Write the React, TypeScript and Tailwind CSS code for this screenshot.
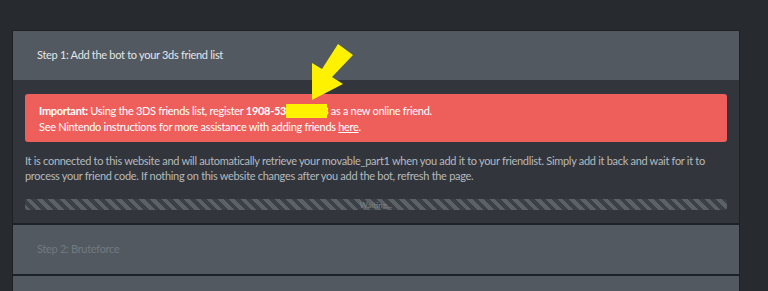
const font = { fontFamily: 'Lato, "Noto Sans", sans-serif' };

function StepCard({ title, active, children }: { title?: string; active?: boolean; children?: React.ReactNode }) {
	return (
		<div className="border border-[#1e2125] bg-[#32363c]">
			<div className="flex h-[49px] items-center bg-[#525960] pl-[24px]">
				{title && (
					<span className={active ? 'text-[11px] tracking-[-0.3px] text-[#e4e6e8]' : 'text-[11px] tracking-[-0.3px] text-[#727980]'}>
						{title}
					</span>
				)}
			</div>
			{children}
		</div>
	);
}

function Arrow() {
	return (
		<svg className="pointer-events-none absolute left-[305px] top-[40px]" width="55" height="65" viewBox="305 40 55 65">
			<polygon points="338,44 353,55 332,77 343,84 312,100 312,63 322,69" fill="#fff200" />
		</svg>
	);
}

export default function App() {
	return (
		<div className="relative h-[291px] w-[768px] overflow-hidden bg-[#272a2f]" style={font}>
			<div className="ml-[12px] w-[728px] pt-[30px]">
				<StepCard title="Step 1: Add the bot to your 3ds friend list" active>
					<div className="px-[12px] pb-[13px] pt-[14px]">
						<div className="rounded-[3px] bg-[#ee5f5b] px-[14px] py-[7px] text-[11px] leading-[16px] tracking-[-0.3px] text-white">
							<p>
								<b>Important:</b> Using the 3DS friends list, register <b>1908-53</b>
								<span className="relative z-10 -mr-[5px] inline-block h-[14px] w-[41px] translate-y-[3px] bg-[#fff200]" />
								<b>8</b> as a new online friend.
							</p>
							<p>
								See Nintendo instructions for more assistance with adding friends <u>here</u>.
							</p>
						</div>
						<p className="mt-[11px] text-[11px] leading-[15px] tracking-[-0.3px] text-[#b5b9bd]">
							It is connected to this website and will automatically retrieve your movable_part1 when you add it to your friendlist. Simply add it back and wait for it to process your friend code. If nothing on this website changes after you add the bot, refresh the page.
						</p>
						<div className="mt-[16px] flex h-[11px] items-center justify-center rounded-[3px] bg-[repeating-linear-gradient(45deg,#5c6167_0_4px,#3b4045_4px_8px)]">
							<span className="text-[8px] leading-none text-[#7a8086]">Waiting...</span>
						</div>
					</div>
				</StepCard>
				<StepCard title="Step 2: Bruteforce" />
				<StepCard />
			</div>
			<Arrow />
		</div>
	);
}
